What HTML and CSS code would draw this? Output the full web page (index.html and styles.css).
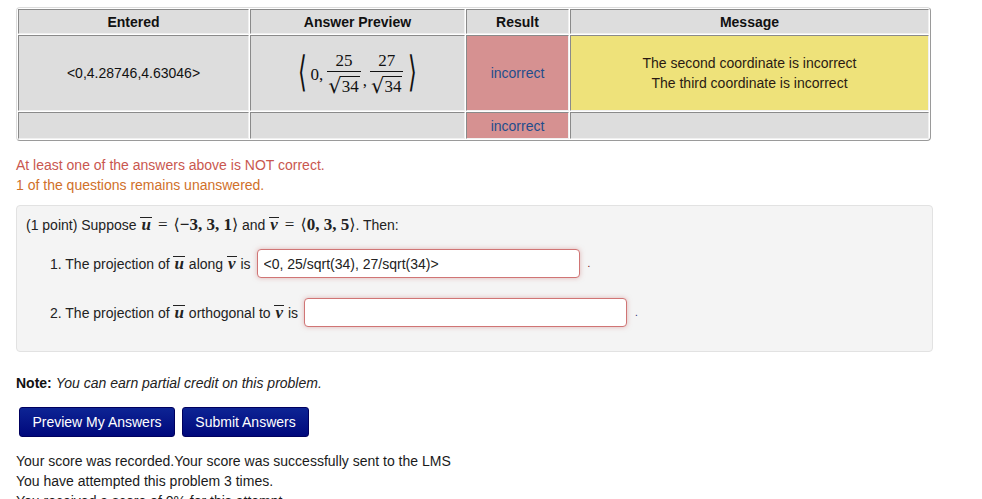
FILE: index.html
```html
<!DOCTYPE html>
<html>
<head>
<meta charset="utf-8">
<link rel="stylesheet" href="styles.css">
</head>
<body>
<div class="page">
  <table class="attempt">
    <colgroup>
      <col class="c1"><col class="c2"><col class="c3"><col class="c4">
    </colgroup>
    <tr class="hrow">
      <th>Entered</th><th>Answer Preview</th><th>Result</th><th>Message</th>
    </tr>
    <tr class="row1">
      <td>&lt;0,4.28746,4.63046&gt;</td>
      <td>
        <span class="pm">
          <span class="bigang">⟨</span>
          <span class="mn">0,</span>
          <span class="frac"><span class="num">25</span><span class="den"><span class="rad">√</span><span class="radicand">34</span></span></span>
          <span class="mn comma">,</span>
          <span class="frac"><span class="num">27</span><span class="den"><span class="rad">√</span><span class="radicand">34</span></span></span>
          <span class="bigang">⟩</span>
        </span>
      </td>
      <td class="bad">incorrect</td>
      <td class="msg">The second coordinate is incorrect<br>The third coordinate is incorrect</td>
    </tr>
    <tr class="row2">
      <td></td><td></td><td class="bad">incorrect</td><td></td>
    </tr>
  </table>

  <div class="feedback">
    <div class="fb-wrong">At least one of the answers above is NOT correct.</div>
    <div class="fb-unans">1 of the questions remains unanswered.</div>
  </div>

  <div class="problem">
    <div class="stmt">(1 point) Suppose <span class="m"><span class="ov bi">u</span><span class="rel">=</span><span class="ang">⟨</span><span class="b">−3, 3, 1</span><span class="ang">⟩</span></span> and <span class="m"><span class="ov bi">v</span><span class="rel">=</span><span class="ang">⟨</span><span class="b">0, 3, 5</span><span class="ang">⟩</span></span>. Then:</div>
    <div class="part p1">
      <span class="ptext">1. The projection of <span class="m"><span class="ov bi">u</span></span> along <span class="m"><span class="ov bi">v</span></span> is</span>
      <input class="ans" type="text" value="&lt;0, 25/sqrt(34), 27/sqrt(34)&gt;">
      <span class="dot red">.</span>
    </div>
    <div class="part p2">
      <span class="ptext">2. The projection of <span class="m"><span class="ov bi">u</span></span> orthogonal to <span class="m"><span class="ov bi">v</span></span> is</span>
      <input class="ans" type="text" value="">
      <span class="dot blue">.</span>
    </div>
  </div>

  <div class="note"><b>Note:</b> <i>You can earn partial credit on this problem.</i></div>

  <div class="buttons">
    <button class="btn btn-preview">Preview My Answers</button>
    <button class="btn btn-submit">Submit Answers</button>
  </div>

  <div class="score">
    <div>Your score was recorded.Your score was successfully sent to the LMS</div>
    <div>You have attempted this problem 3 times.</div>
    <div>You received a score of 0% for this attempt.</div>
  </div>
</div>
</body>
</html>
```

FILE: styles.css
```css
html, body {
  margin: 0;
  padding: 0;
  background: #fff;
}
body {
  font-family: "Liberation Sans", Arial, sans-serif;
  font-size: 14px;
  line-height: 20px;
  color: #222;
}
.page {
  padding: 7px 0 0 16px;
}

/* ---------- attempt results table ---------- */
table.attempt {
  border-collapse: separate;
  border-spacing: 1px;
  border: 1px solid;
  border-color: #dcdcdc #9a9a9a #9a9a9a #dcdcdc;
  border-radius: 4px;
  width: 915px;
  table-layout: fixed;
}
col.c1 { width: 231px; }
col.c2 { width: 215px; }
col.c3 { width: 103px; }
col.c4 { width: 359px; }

table.attempt th,
table.attempt td {
  background: #dddddd;
  border: 1px solid;
  border-color: #8a8a8a #f0f0f0 #f0f0f0 #8a8a8a;
  text-align: center;
  vertical-align: middle;
  padding: 0 5px;
  color: #111;
}
table.attempt th {
  height: 25px;
  font-weight: bold;
  box-sizing: border-box;
}
.row1 td { height: 76px; box-sizing: border-box; }
.row2 td { height: 27px; box-sizing: border-box; }

table.attempt td.bad {
  background: #d69191;
  color: #1f4d8c;
}
table.attempt td.msg {
  background: #eee27a;
  color: #2a1a12;
}

/* preview math */
.pm {
  display: inline-flex;
  align-items: center;
  font-family: "Liberation Serif", "DejaVu Serif", serif;
  font-size: 17px;
  color: #111;
  line-height: 1;
}
.bigang {
  display: inline-block;
  font-family: "DejaVu Sans", sans-serif;
  font-weight: 200;
  font-size: 15px;
  transform: scale(1.5, 2.8);
  margin: 0 6px 0 5px;
}
.mn { display: inline-block; margin-right: 3px; margin-top: 3px; }
.comma { margin-top: 14px; margin-left: 1px; margin-right: 2px; }
.frac {
  display: inline-flex;
  flex-direction: column;
  align-items: center;
  padding: 0 1px;
}
.num {
  display: block;
  padding: 0 4px 2px;
  border-bottom: 1px solid #111;
  align-self: stretch;
  text-align: center;
}
.den {
  display: flex;
  align-items: flex-start;
  padding: 4px 1px 0;
}
.rad {
  font-family: "DejaVu Serif", serif;
  font-size: 21px;
  line-height: 19px;
  margin-right: -1px;
  transform: translateY(1px);
}
.radicand {
  border-top: 1px solid #111;
  padding: 1px 1px 0;
  line-height: 17px;
}

/* ---------- feedback ---------- */
.feedback {
  margin-top: 14px;
}
.fb-wrong { color: #c9574f; }
.fb-unans { color: #d0702a; }

/* ---------- problem ---------- */
.problem {
  margin-top: 10px;
  width: 917px;
  background: #f4f4f4;
  border: 1px solid #e2e2e2;
  border-radius: 4px;
  padding: 9px 0 23px 9px;
  box-sizing: border-box;
  height: 147px;
}
.m {
  font-family: "Liberation Serif", "DejaVu Serif", serif;
  font-size: 17px;
}
.ov {
  display: inline-block;
  border-top: 1px solid #222;
  line-height: 12px;
  padding: 1px 1px 0;
}
.bi { font-weight: bold; font-style: italic; }
.b { font-weight: bold; }
.rel { margin: 0 6px; }
.ang { font-family: "DejaVu Serif", serif; font-size: 16px; }

.part {
  display: flex;
  align-items: center;
  padding-left: 24px;
  height: 29px;
}
.p1 { margin-top: 14px; }
.p2 { margin-top: 20px; }
.ptext { white-space: nowrap; }
.ans {
  margin-left: 6px;
  width: 323px;
  height: 29px;
  box-sizing: border-box;
  border: 1px solid #d07575;
  border-radius: 4px;
  box-shadow: 0 0 5px rgba(206, 132, 131, 0.55);
  background: #fff;
  padding: 0 6px;
  font-family: "Liberation Sans", Arial, sans-serif;
  font-size: 14px;
  color: #222;
  outline: none;
}
.dot { margin-left: 8px; font-size: 10px; }
.dot.red { color: #600; }
.dot.blue { color: #226; }

/* ---------- note & buttons ---------- */
.note {
  margin-top: 21px;
}
.note b { color: #111; }
.buttons {
  margin-top: 14px;
  display: flex;
  gap: 7px;
  padding-left: 3px;
}
.btn {
  height: 30px;
  border: 1px solid #00005e;
  border-radius: 3px;
  background: linear-gradient(#0d2494, #00087c);
  color: #fff;
  font-family: "Liberation Sans", Arial, sans-serif;
  font-size: 14px;
  padding: 0 12px;
  cursor: pointer;
}
.btn-preview { width: 156px; }
.btn-submit { width: 127px; }

.score {
  margin-top: 14px;
  color: #1a1a1a;
}
```
